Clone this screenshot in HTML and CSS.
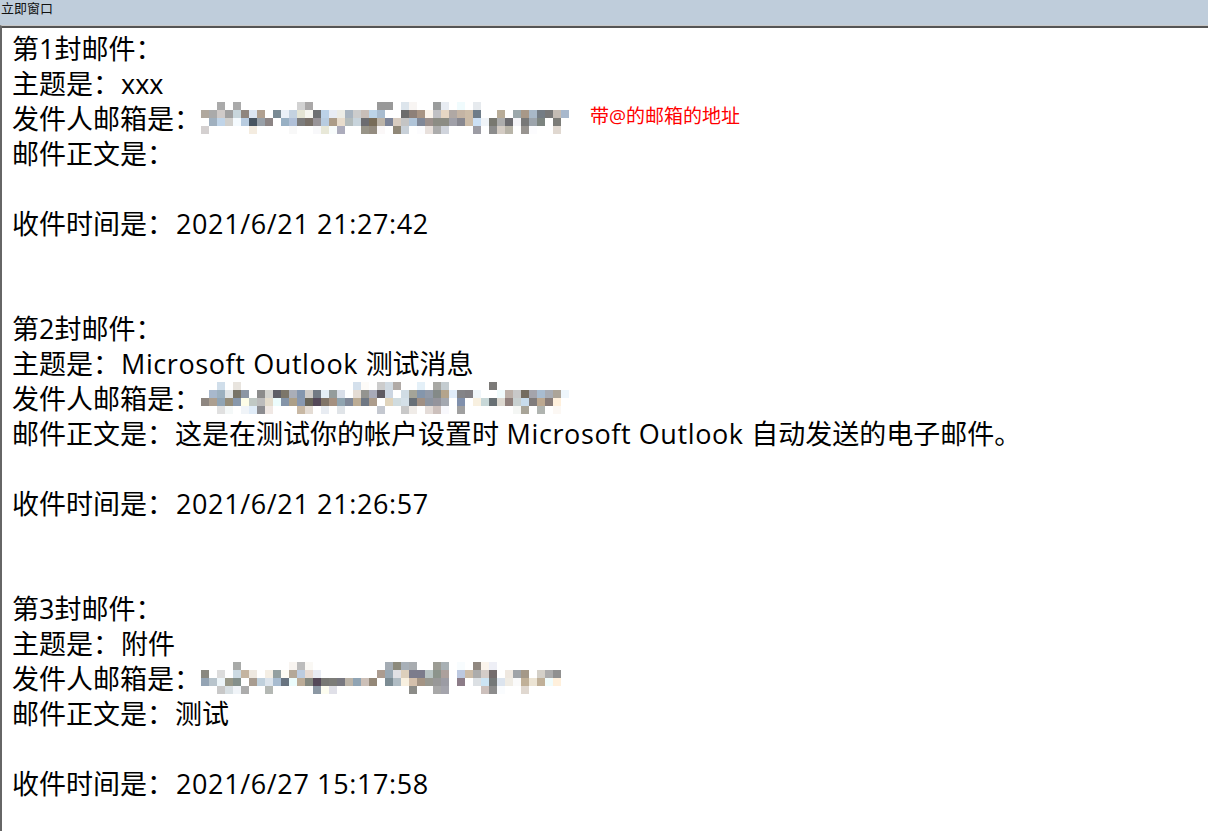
FILE: index.html
```html
<!DOCTYPE html>
<html lang="zh-CN">
<head>
<meta charset="utf-8">
<title>立即窗口</title>
<link rel="stylesheet" href="styles.css">
</head>
<body>
<header class="titlebar">立即窗口</header>
<main class="pane">
<div class="line">第1封邮件&#xFF1A;</div>
<div class="line">主题是&#xFF1A;<span class="val">xxx</span></div>
<div class="line">发件人邮箱是&#xFF1A;<svg class="mosaic" width="368" height="32" viewBox="0 0 368 32" shape-rendering="crispEdges" aria-hidden="true">
<g><rect x="16" fill="#aaaaaa"/><rect x="32" fill="#aaaaaa"/><rect x="96" fill="#d2d2d2"/><rect x="104" fill="#aaa8a8"/><rect x="176" fill="#999999"/><rect x="184" fill="#999999"/><rect x="200" fill="#dde5ec"/><rect x="208" fill="#f8f5f3"/><rect x="232" fill="#9a9c9c"/><rect x="240" fill="#e8ecf2"/><rect x="256" fill="#f0fbfd"/><rect x="272" fill="#e6eaee"/></g>
<g transform="translate(0,8)"><rect x="0" fill="#b0a89e"/><rect x="8" fill="#aaaaaa"/><rect x="16" fill="#cfcac8"/><rect x="24" fill="#a0a0a0"/><rect x="32" fill="#c8d6dc"/><rect x="40" fill="#8f857d"/><rect x="48" fill="#dde6f2"/><rect x="56" fill="#b0a090"/><rect x="72" fill="#7a8a94"/><rect x="80" fill="#eaf0f8"/><rect x="88" fill="#c4d2e0"/><rect x="96" fill="#e4e4d4"/><rect x="104" fill="#f6f6f0"/><rect x="112" fill="#6e7072"/><rect x="120" fill="#bcd2e8"/><rect x="128" fill="#e8ecf4"/><rect x="136" fill="#ecece6"/><rect x="144" fill="#a8b4c0"/><rect x="152" fill="#cccccc"/><rect x="160" fill="#c8beb8"/><rect x="168" fill="#bcd4e8"/><rect x="176" fill="#a8bccf"/><rect x="200" fill="#6c6c6c"/><rect x="208" fill="#8e8078"/><rect x="216" fill="#a89484"/><rect x="224" fill="#fbf4ec"/><rect x="232" fill="#c0c0c4"/><rect x="240" fill="#e6d6c4"/><rect x="248" fill="#b0a8a4"/><rect x="256" fill="#c4b4a4"/><rect x="264" fill="#ccbca8"/><rect x="272" fill="#6e7c88"/><rect x="296" fill="#b8ac98"/><rect x="312" fill="#9ca8ac"/><rect x="320" fill="#a89888"/><rect x="328" fill="#a8b8c8"/><rect x="336" fill="#747c84"/><rect x="344" fill="#787878"/><rect x="352" fill="#c4bcb4"/><rect x="360" fill="#a8b8cc"/></g>
<g transform="translate(0,16)"><rect x="8" fill="#a0b0bf"/><rect x="16" fill="#c0d4e8"/><rect x="24" fill="#d0cfcc"/><rect x="32" fill="#f4fafe"/><rect x="40" fill="#b8cce0"/><rect x="48" fill="#485460"/><rect x="56" fill="#98a0a8"/><rect x="64" fill="#8c8484"/><rect x="80" fill="#98b0c4"/><rect x="88" fill="#b0c0d8"/><rect x="96" fill="#7c7c7c"/><rect x="104" fill="#787068"/><rect x="112" fill="#989498"/><rect x="120" fill="#b8cce0"/><rect x="128" fill="#ac9c88"/><rect x="136" fill="#e8dccc"/><rect x="144" fill="#b4bcbc"/><rect x="152" fill="#c8d4dc"/><rect x="160" fill="#6c6c70"/><rect x="168" fill="#786c58"/><rect x="176" fill="#bcb4a8"/><rect x="184" fill="#7c8498"/><rect x="192" fill="#d8ccc0"/><rect x="200" fill="#c4c4c4"/><rect x="208" fill="#b0c4d8"/><rect x="216" fill="#808898"/><rect x="224" fill="#9c908c"/><rect x="232" fill="#8c8c84"/><rect x="240" fill="#8c8c84"/><rect x="248" fill="#a0a0a8"/><rect x="256" fill="#888890"/><rect x="264" fill="#ccbca8"/><rect x="272" fill="#cce0f4"/><rect x="280" fill="#f0f4f8"/><rect x="288" fill="#787870"/><rect x="296" fill="#acacac"/><rect x="304" fill="#6c6c70"/><rect x="312" fill="#f4f4f8"/><rect x="320" fill="#787878"/><rect x="328" fill="#9ca4ac"/><rect x="336" fill="#7c8480"/><rect x="352" fill="#7c7c78"/></g>
<g transform="translate(0,24)"><rect x="0" fill="#d4d0d0"/><rect x="48" fill="#f4ece0"/><rect x="88" fill="#f8f8f8"/><rect x="112" fill="#f8f8fa"/><rect x="120" fill="#e8e8d8"/><rect x="128" fill="#f8fcfc"/><rect x="136" fill="#acacbc"/><rect x="160" fill="#989488"/><rect x="168" fill="#948c80"/><rect x="176" fill="#fbf8f8"/><rect x="192" fill="#908878"/><rect x="200" fill="#c8d0d8"/><rect x="216" fill="#fcfcfe"/><rect x="224" fill="#e8e0dc"/><rect x="232" fill="#acacac"/><rect x="240" fill="#d0d4dc"/><rect x="272" fill="#9c9ca4"/><rect x="288" fill="#8c8c8c"/><rect x="296" fill="#d4ccc4"/><rect x="304" fill="#b8b4a8"/><rect x="320" fill="#989490"/><rect x="328" fill="#fcfcfe"/><rect x="352" fill="#e0d8d0"/></g>
</svg><span class="note">带@的邮箱的地址</span></div>
<div class="line">邮件正文是&#xFF1A;</div>
<div class="line"></div>
<div class="line">收件时间是&#xFF1A;<span class="val num">2021/6/21 21:27:42</span></div>
<div class="line"></div>
<div class="line"></div>
<div class="line">第2封邮件&#xFF1A;</div>
<div class="line">主题是&#xFF1A;<span class="val"><span class="en">Microsoft Outlook </span>测试消息</span></div>
<div class="line">发件人邮箱是&#xFF1A;<svg class="mosaic" width="368" height="32" viewBox="0 0 368 32" shape-rendering="crispEdges" aria-hidden="true">
<g><rect x="16" fill="#d0deea"/><rect x="32" fill="#e8e4de"/><rect x="152" fill="#d4e0ec"/><rect x="160" fill="#fdfbf8"/><rect x="176" fill="#cccccc"/><rect x="184" fill="#d0dae2"/><rect x="192" fill="#b0aaa6"/><rect x="216" fill="#e4f0f8"/><rect x="232" fill="#a8a8a4"/><rect x="240" fill="#c4ccd0"/><rect x="288" fill="#7c7a78"/></g>
<g transform="translate(0,8)"><rect x="8" fill="#a8b8cc"/><rect x="16" fill="#9cb0bf"/><rect x="24" fill="#e0e4e6"/><rect x="32" fill="#787468"/><rect x="40" fill="#8c96a4"/><rect x="56" fill="#8c8c8c"/><rect x="64" fill="#d4d4d0"/><rect x="72" fill="#5e5e66"/><rect x="80" fill="#7c766a"/><rect x="88" fill="#aaaeb8"/><rect x="96" fill="#8496ae"/><rect x="104" fill="#d0ccc8"/><rect x="112" fill="#727a84"/><rect x="120" fill="#e4eef6"/><rect x="128" fill="#949c9c"/><rect x="136" fill="#d8dee8"/><rect x="152" fill="#e4dcd4"/><rect x="160" fill="#949490"/><rect x="168" fill="#a8aab8"/><rect x="176" fill="#5e5a62"/><rect x="184" fill="#ccd6e2"/><rect x="200" fill="#d0dce4"/><rect x="208" fill="#a4a498"/><rect x="216" fill="#8496ac"/><rect x="224" fill="#929aa8"/><rect x="232" fill="#848a88"/><rect x="240" fill="#b4a48c"/><rect x="248" fill="#e0ecfa"/><rect x="256" fill="#848488"/><rect x="264" fill="#828084"/><rect x="272" fill="#f0f6fa"/><rect x="296" fill="#f0fbfc"/><rect x="304" fill="#bcb0a8"/><rect x="312" fill="#c8c8c8"/><rect x="320" fill="#746c60"/><rect x="328" fill="#a4a4ac"/><rect x="336" fill="#a8bcd0"/><rect x="344" fill="#a8acb4"/><rect x="352" fill="#aca498"/><rect x="360" fill="#eef6fc"/></g>
<g transform="translate(0,16)"><rect x="0" fill="#8e8680"/><rect x="8" fill="#ac9f90"/><rect x="16" fill="#90a4b4"/><rect x="24" fill="#948c78"/><rect x="32" fill="#8898ac"/><rect x="40" fill="#fdfde8"/><rect x="48" fill="#c0c8c4"/><rect x="56" fill="#bcbcbc"/><rect x="64" fill="#e4dccc"/><rect x="72" fill="#ecfcfc"/><rect x="80" fill="#8494a8"/><rect x="88" fill="#ac9f88"/><rect x="96" fill="#8898b0"/><rect x="104" fill="#686458"/><rect x="112" fill="#544858"/><rect x="120" fill="#807468"/><rect x="128" fill="#a49080"/><rect x="136" fill="#90a4b0"/><rect x="144" fill="#808898"/><rect x="152" fill="#bcac94"/><rect x="160" fill="#707884"/><rect x="168" fill="#ac9c8c"/><rect x="184" fill="#e0d4bc"/><rect x="192" fill="#d0dce0"/><rect x="200" fill="#d4e0e8"/><rect x="208" fill="#687078"/><rect x="216" fill="#a09084"/><rect x="224" fill="#8c94a0"/><rect x="232" fill="#94949c"/><rect x="240" fill="#a4a8b0"/><rect x="256" fill="#8090ac"/><rect x="272" fill="#f8f0e0"/><rect x="280" fill="#c8d8d8"/><rect x="288" fill="#687074"/><rect x="296" fill="#dcd8d0"/><rect x="304" fill="#90807c"/><rect x="312" fill="#c8d0d0"/><rect x="320" fill="#c8dcec"/><rect x="328" fill="#807c7c"/><rect x="336" fill="#bca890"/><rect x="344" fill="#887c78"/><rect x="352" fill="#fff0dc"/></g>
<g transform="translate(0,24)"><rect x="16" fill="#e0e0e0"/><rect x="24" fill="#f4f8f8"/><rect x="40" fill="#f0f4f8"/><rect x="48" fill="#e0ecf8"/><rect x="56" fill="#8c8c90"/><rect x="64" fill="#f0e8e4"/><rect x="96" fill="#c8b8a4"/><rect x="104" fill="#e4dcd4"/><rect x="120" fill="#e8ecf2"/><rect x="136" fill="#e0e4e8"/><rect x="176" fill="#c4c8d0"/><rect x="200" fill="#c8c8c8"/><rect x="208" fill="#f0ece8"/><rect x="224" fill="#e4dcd8"/><rect x="232" fill="#ccc0bc"/><rect x="240" fill="#f8f8fc"/><rect x="256" fill="#a0a0a0"/><rect x="312" fill="#f4f6f4"/><rect x="320" fill="#a8a498"/><rect x="336" fill="#b0b4b0"/><rect x="352" fill="#fcf8f4"/></g>
</svg></div>
<div class="line">邮件正文是&#xFF1A;<span class="val">这是在测试你的帐户设置时<span class="en"> Microsoft Outlook </span>自动发送的电子邮件。</span></div>
<div class="line"></div>
<div class="line">收件时间是&#xFF1A;<span class="val num">2021/6/21 21:26:57</span></div>
<div class="line"></div>
<div class="line"></div>
<div class="line">第3封邮件&#xFF1A;</div>
<div class="line">主题是&#xFF1A;<span class="val">附件</span></div>
<div class="line">发件人邮箱是&#xFF1A;<svg class="mosaic" width="368" height="32" viewBox="0 0 368 32" shape-rendering="crispEdges" aria-hidden="true">
<g><rect x="32" fill="#a8aaa8"/><rect x="88" fill="#f8f4f0"/><rect x="96" fill="#bcbcbc"/><rect x="104" fill="#faf8f4"/><rect x="184" fill="#a4acb4"/><rect x="192" fill="#8c8a7c"/><rect x="200" fill="#a8b0b8"/><rect x="208" fill="#a8acb0"/><rect x="232" fill="#9c9c94"/><rect x="240" fill="#a8b0b4"/><rect x="256" fill="#f8fcfe"/><rect x="272" fill="#908880"/><rect x="280" fill="#fbf4ec"/><rect x="288" fill="#eeeff6"/></g>
<g transform="translate(0,8)"><rect x="0" fill="#8a8880"/><rect x="16" fill="#dcdcdc"/><rect x="32" fill="#ccdae2"/><rect x="40" fill="#c4b4a0"/><rect x="48" fill="#eee8e0"/><rect x="64" fill="#f4eee4"/><rect x="72" fill="#94a0a0"/><rect x="80" fill="#fefcf4"/><rect x="88" fill="#b4a898"/><rect x="96" fill="#bccce0"/><rect x="104" fill="#e8dcd4"/><rect x="112" fill="#e8ecf4"/><rect x="176" fill="#ac9c90"/><rect x="184" fill="#98a8b4"/><rect x="192" fill="#e0e0e4"/><rect x="200" fill="#dccfbc"/><rect x="208" fill="#7c7c8c"/><rect x="216" fill="#7c7c8c"/><rect x="224" fill="#b8c4c4"/><rect x="232" fill="#8c948c"/><rect x="240" fill="#aca09c"/><rect x="256" fill="#bcc8e0"/><rect x="264" fill="#ccbca8"/><rect x="272" fill="#acacac"/><rect x="280" fill="#d4ccc8"/><rect x="288" fill="#746c6c"/><rect x="304" fill="#efe8e0"/><rect x="312" fill="#a0a4a8"/><rect x="320" fill="#a49888"/><rect x="336" fill="#d4d0c8"/><rect x="344" fill="#acacac"/><rect x="352" fill="#909090"/></g>
<g transform="translate(0,16)"><rect x="0" fill="#94a4b4"/><rect x="8" fill="#b8c4cc"/><rect x="16" fill="#ecf4f8"/><rect x="24" fill="#989888"/><rect x="32" fill="#84908c"/><rect x="48" fill="#a89c90"/><rect x="56" fill="#c0d0dc"/><rect x="64" fill="#dce4ec"/><rect x="72" fill="#a8bcd0"/><rect x="80" fill="#687480"/><rect x="88" fill="#ecfcfc"/><rect x="96" fill="#bcac98"/><rect x="104" fill="#848880"/><rect x="112" fill="#544858"/><rect x="120" fill="#787874"/><rect x="128" fill="#7c7c78"/><rect x="136" fill="#787880"/><rect x="144" fill="#bcb4a8"/><rect x="152" fill="#90a4b4"/><rect x="160" fill="#ccc0b8"/><rect x="168" fill="#948878"/><rect x="184" fill="#7c8c94"/><rect x="192" fill="#b0bcc4"/><rect x="200" fill="#f8f0e0"/><rect x="208" fill="#d4c0ac"/><rect x="216" fill="#a49484"/><rect x="224" fill="#989890"/><rect x="232" fill="#989898"/><rect x="240" fill="#9c9ca4"/><rect x="256" fill="#8c7c88"/><rect x="272" fill="#dce0e4"/><rect x="280" fill="#cce4f4"/><rect x="288" fill="#747878"/><rect x="296" fill="#dce4ee"/><rect x="304" fill="#f0ece4"/><rect x="312" fill="#fafafa"/><rect x="320" fill="#c0b098"/><rect x="328" fill="#ece4d4"/><rect x="336" fill="#c0b098"/><rect x="344" fill="#f0fcfc"/><rect x="352" fill="#fff0dc"/></g>
<g transform="translate(0,24)"><rect x="16" fill="#c8c8c8"/><rect x="24" fill="#d8e0e4"/><rect x="32" fill="#f0f4f8"/><rect x="40" fill="#acacac"/><rect x="64" fill="#b4b8b4"/><rect x="112" fill="#8c98a4"/><rect x="120" fill="#fdfdf0"/><rect x="128" fill="#e0e0e8"/><rect x="208" fill="#8c8c88"/><rect x="232" fill="#a8a8a8"/><rect x="240" fill="#a4a4ac"/><rect x="280" fill="#ccc0bc"/><rect x="288" fill="#8c8c8c"/><rect x="296" fill="#fafcfe"/><rect x="320" fill="#e0d8d0"/></g>
</svg></div>
<div class="line">邮件正文是&#xFF1A;<span class="val">测试</span></div>
<div class="line"></div>
<div class="line">收件时间是&#xFF1A;<span class="val num">2021/6/27 15:17:58</span></div>
</main>
</body>
</html>
```

FILE: styles.css
```css
html, body {
  margin: 0;
  height: 100%;
  overflow: hidden;
  background: #fff;
}
body {
  display: flex;
  flex-direction: column;
  font-family: "Open Sans", "Noto Sans CJK SC", sans-serif;
  color: #000;
}
.titlebar {
  height: 25px;
  flex: none;
  padding-left: 1px;
  background: #bfcddb;
  font-family: "Noto Sans CJK SC", sans-serif;
  font-size: 13px;
  line-height: 15px;
  color: #111;
}
.pane {
  flex: 1;
  min-height: 0;
  overflow: hidden;
  padding: 5px 0 0 10px;
  border-top: 1px solid #c8c8c8;
  box-shadow: inset 0 2px 0 #555;
  border-left: 2px solid #666;
  font-size: 27px;
}
.line {
  display: flex;
  align-items: flex-start;
  height: 35px;
  line-height: 35px;
  white-space: pre;
}
.val {
  margin-left: 1px;
}
.num {
  margin-left: 2px;
  letter-spacing: 0.62px;
}
.en {
  letter-spacing: 0.6px;
}
.mosaic {
  flex: none;
  margin-top: 1px;
}
.mosaic rect {
  width: 8px;
  height: 8px;
}
.note {
  margin-left: 21px;
  font-size: 19px;
  line-height: 30px;
  color: #f00;
}
```
